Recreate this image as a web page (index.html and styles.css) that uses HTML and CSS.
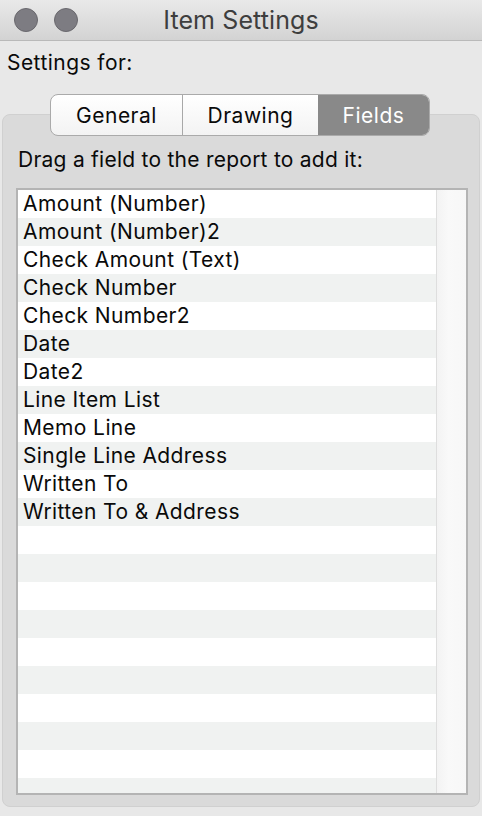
FILE: index.html
```html
<!DOCTYPE html>
<html>
<head>
<meta charset="utf-8">
<title>Item Settings</title>
<link rel="stylesheet" href="styles.css">
</head>
<body>
<div class="window">
  <div class="titlebar">
    <div class="lights">
      <span class="light"></span>
      <span class="light"></span>
    </div>
    <div class="title">Item Settings</div>
  </div>
  <div class="settings-for">Settings for:</div>
  <div class="panel">
    <div class="tabs">
      <div class="tab tab-general">General</div>
      <div class="tab tab-drawing">Drawing</div>
      <div class="tab tab-fields active">Fields</div>
    </div>
    <div class="hint">Drag a field to the report to add it:</div>
    <div class="listbox">
      <div class="rows">
        <div class="row">Amount (Number)</div>
        <div class="row">Amount (Number)2</div>
        <div class="row">Check Amount (Text)</div>
        <div class="row">Check Number</div>
        <div class="row">Check Number2</div>
        <div class="row">Date</div>
        <div class="row">Date2</div>
        <div class="row">Line Item List</div>
        <div class="row">Memo Line</div>
        <div class="row">Single Line Address</div>
        <div class="row">Written To</div>
        <div class="row">Written To &amp; Address</div>
        <div class="row"></div>
        <div class="row"></div>
        <div class="row"></div>
        <div class="row"></div>
        <div class="row"></div>
        <div class="row"></div>
        <div class="row"></div>
        <div class="row"></div>
        <div class="row"></div>
        <div class="row"></div>
      </div>
      <div class="gutter"></div>
    </div>
  </div>
</div>
</body>
</html>
```
FILE: styles.css
```css
html, body {
  margin: 0;
  padding: 0;
}
body {
  width: 482px;
  height: 816px;
  overflow: hidden;
  background: #e8e8e8;
  font-family: Inter, "Liberation Sans", sans-serif;
  color: #0a0a0a;
}
.window {
  height: 816px;
  display: flex;
  flex-direction: column;
}
.titlebar {
  position: relative;
  height: 40px;
  flex: 0 0 40px;
  border-bottom: 1px solid #b9b9b9;
  background: linear-gradient(#e9e9e9, #d3d3d3);
  display: flex;
  align-items: center;
}
.lights {
  display: flex;
  gap: 16px;
  padding-left: 14px;
}
.light {
  width: 22px;
  height: 22px;
  border-radius: 50%;
  background: #7d7c82;
  border: 1px solid #69686d;
}
.title {
  position: absolute;
  left: 0;
  right: 0;
  top: 0;
  line-height: 40px;
  text-align: center;
  font-size: 25px;
  letter-spacing: 0.1px;
  color: #3e3e3e;
  pointer-events: none;
}
.settings-for {
  margin-top: 8px;
  padding-left: 7px;
  font-size: 21px;
  letter-spacing: 0.45px;
  line-height: 28px;
  height: 28px;
}
.panel {
  margin: 37px 2px 9px 2px;
  flex: 1;
  background: #dadada;
  border: 1px solid #d0d0d0;
  border-radius: 8px;
  display: flex;
  flex-direction: column;
}
.tabs {
  margin: -21px 0 0 47px;
  width: 380px;
  height: 42px;
  box-sizing: border-box;
  display: flex;
  border: 1px solid #aaaaaa;
  border-radius: 8px;
  overflow: hidden;
  background: linear-gradient(#ffffff, #f3f3f3);
}
.tab {
  display: flex;
  align-items: center;
  justify-content: center;
  font-size: 21px;
  letter-spacing: 0.5px;
  color: #0a0a0a;
}
.tab-general {
  width: 131px;
  border-right: 1px solid #a8a8a8;
}
.tab-drawing {
  width: 135px;
}
.tab-fields {
  flex: 1;
}
.tab.active {
  background: #898989;
  color: #ffffff;
}
.hint {
  margin: 10px 0 0 15px;
  font-size: 21px;
  letter-spacing: 0.25px;
  line-height: 28px;
  height: 28px;
}
.listbox {
  margin: 14px 11px 0 13px;
  height: 607px;
  box-sizing: border-box;
  border: 2px solid #b4b4b4;
  display: flex;
  overflow: hidden;
  background: #ffffff;
}
.rows {
  width: 418px;
  flex: 0 0 418px;
  border-right: 1px solid #dedede;
  overflow: hidden;
}
.row {
  height: 28px;
  line-height: 28px;
  padding-left: 5px;
  font-size: 21px;
  letter-spacing: 0.4px;
  color: #0a0a0a;
  white-space: nowrap;
  background: #ffffff;
}
.row:nth-child(even) {
  background: #f0f2f1;
}
.gutter {
  flex: 1;
  background: linear-gradient(90deg, #f3f3f3, #f9f9f9 40%, #f7f7f7);
}
```
